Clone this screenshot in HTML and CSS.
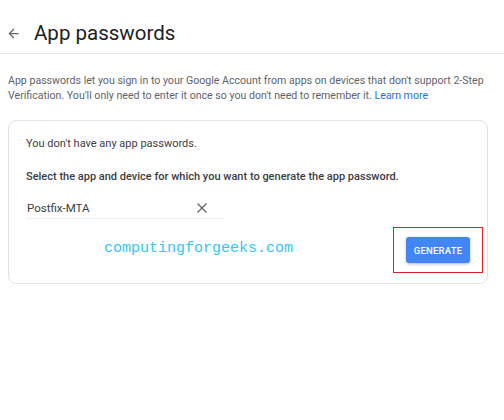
FILE: index.html
```html
<!DOCTYPE html>
<html lang="en">
<head>
<meta charset="utf-8">
<title>App passwords</title>
<link rel="stylesheet" href="styles.css">
</head>
<body>

<header class="topbar">
    <svg class="back" width="15" height="15" viewBox="0 0 24 24">
        <path d="M20 11H7.83l5.59-5.59L12 4l-8 8 8 8 1.41-1.41L7.83 13H20v-2z" fill="#5f6368"/>
    </svg>
    <h1>App passwords</h1>
</header>

<p class="intro">
    App passwords let you sign in to your Google Account from apps on devices that don't support 2-Step
    Verification. You'll only need to enter it once so you don't need to remember it.
    <a href="#">Learn more</a>
</p>

<section class="card">
    <p class="empty">You don't have any app passwords.</p>
    <p class="hint">Select the app and device for which you want to generate the app password.</p>

    <div class="field">
        <span class="value">Postfix-MTA</span>
        <svg class="clear" width="10" height="10" viewBox="0 0 10 10">
            <path d="M0.5 0.5L9.5 9.5M9.5 0.5L0.5 9.5" stroke="#5f6368" stroke-width="1.3"/>
        </svg>
    </div>

    <div class="actions">
        <span class="watermark">computingforgeeks.com</span>
        <div class="highlight">
            <button class="generate">GENERATE</button>
        </div>
    </div>
</section>

</body>
</html>
```

FILE: styles.css
```css
body {
    margin: 0;
    background: #fff;
    font-family: Roboto, "Liberation Sans", sans-serif;
    color: #5f6368;
}

.topbar {
    height: 54px;
    padding-top: 13px;
    display: flex;
    align-items: center;
    border-bottom: 1px solid #e8e8e8;
    box-sizing: border-box;
}
.topbar .back {
    margin: 0 13px 0 6px;
}
.topbar h1 {
    margin: 0;
    font-size: 20.5px;
    font-weight: 400;
    color: #202124;
}

.intro {
    margin: 19px 8px 0 8px;
    font-size: 10.6px;
    line-height: 15px;
}
.intro a {
    color: #1a73e8;
    text-decoration: none;
}

.card {
    margin: 17px 16px 0 8px;
    width: 480px;
    box-sizing: border-box;
    border: 1px solid #e3e3e3;
    border-radius: 8px;
    padding: 16px 4px 10px 17px;
}
.card p {
    margin: 0;
    font-size: 11px;
    line-height: 14px;
    color: #3c4043;
}
.card .hint {
    margin-top: 19px;
    font-weight: 500;
}

.field {
    margin-top: 14px;
    width: 198px;
    height: 21px;
    box-sizing: border-box;
    display: flex;
    align-items: center;
    justify-content: space-between;
    padding: 0 17px 0 1px;
    border-bottom: 1px solid #eeeeee;
}
.field .value {
    font-size: 11.5px;
    color: #3c4043;
}

.actions {
    display: flex;
    align-items: center;
    justify-content: space-between;
    margin-top: 8px;
}
.watermark {
    margin: 0 0 4px 78px;
    font-family: "Liberation Mono", monospace;
    font-size: 15px;
    color: #33c6f4;
}
.highlight {
    width: 90px;
    height: 46px;
    box-sizing: border-box;
    border: 1px solid #e02020;
    display: flex;
    align-items: center;
    justify-content: center;
}
.generate {
    width: 64px;
    height: 26px;
    border: 0;
    border-radius: 3px;
    background: #4285f4;
    color: #fff;
    font-family: Roboto, "Liberation Sans", sans-serif;
    font-size: 9.5px;
    font-weight: 500;
    letter-spacing: 0.2px;
    box-shadow: 0 1px 3px rgba(0, 0, 0, 0.3);
    padding: 0;
}
```
